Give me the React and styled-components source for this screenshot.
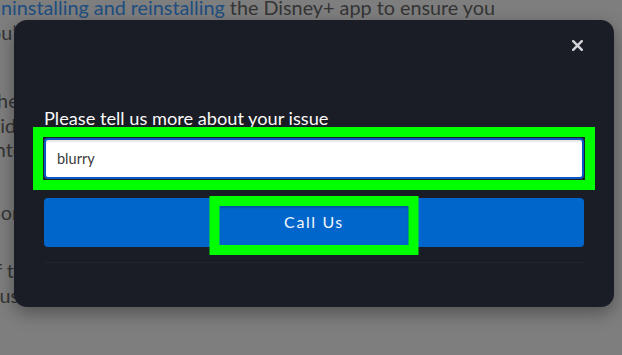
import React from "react";
import styled, { createGlobalStyle } from "styled-components";

const Global = createGlobalStyle`
  html, body { margin: 0; padding: 0; }
  body {
    width: 622px;
    height: 355px;
    overflow: hidden;
    background: #ffffff;
    font-family: Lato, "Noto Sans", sans-serif;
  }
`;

const Page = styled.div`
  position: relative;
  width: 622px;
  height: 355px;
  overflow: hidden;
  background: #fdfdfd;
`;

const Article = styled.div`
  margin-left: -10px;
  margin-top: -5px;
  width: 560px;
  color: #6a6a6a;
  font-size: 19.8px;
  line-height: 24.5px;
  white-space: nowrap;
`;

const Para = styled.p`
  margin: 0 0 ${(p) => p.$gap || 0}px 0;
  text-indent: ${(p) => p.$indent || 0}px;
`;

const Link = styled.span`
  color: #3e9cff;
`;

const Overlay = styled.div`
  position: absolute;
  inset: 0;
  background: rgba(0, 0, 0, 0.5);
  display: flex;
  align-items: flex-start;
  justify-content: flex-start;
  padding: 20px 0 0 14px;
`;

const Modal = styled.div`
  width: 600px;
  height: 287px;
  box-sizing: border-box;
  background: #1b1d26;
  border-radius: 13px;
  padding: 19px 30px 0 30px;
  display: flex;
  flex-direction: column;
  box-shadow: 0 6px 18px rgba(0, 0, 0, 0.35);
`;

const Header = styled.div`
  display: flex;
  justify-content: flex-end;
  padding-right: 1px;
  height: 12px;
`;

const CloseButton = styled.button`
  width: 12px;
  height: 12px;
  padding: 0;
  border: 0;
  background: transparent;
  display: flex;
  align-items: center;
  justify-content: center;
  cursor: pointer;
`;

const Label = styled.label`
  margin-top: 56px;
  color: #f9f9f9;
  font-size: 18.2px;
  line-height: 22px;
  height: 22px;
`;

const InputFrame = styled.div`
  margin: -2px -11px 0 -11px;
  border: 10px solid #00ff00;
  padding: 1px;
  background: #1f2128;
`;

const Input = styled.input`
  display: block;
  width: 100%;
  height: 41px;
  box-sizing: border-box;
  border: 2px solid #0a56c2;
  border-radius: 4px;
  background: #ffffff;
  box-shadow: inset 0 2px 2px rgba(0, 0, 0, 0.1);
  padding: 0 11px;
  font-family: Lato, "Noto Sans", sans-serif;
  font-size: 14.5px;
  color: #3b3b3b;
  outline: none;
`;

const ActionButton = styled.button`
  position: relative;
  margin-top: 8px;
  width: 100%;
  height: 49px;
  border: 0;
  border-radius: 4px;
  background: #0066cc;
  color: #f4f7fb;
  font-family: Lato, "Noto Sans", sans-serif;
  font-size: 16px;
  letter-spacing: 1.6px;
  cursor: pointer;
  display: flex;
  align-items: center;
  justify-content: center;
  padding: 0 0 2px 0;
`;

const Highlight = styled.span`
  position: absolute;
  left: 50%;
  top: -2px;
  transform: translateX(-50%);
  width: 209px;
  height: 59px;
  box-sizing: border-box;
  border: 10px solid #00ff00;
  box-shadow: inset 0 2px 2px rgba(0, 0, 0, 0.18);
  pointer-events: none;
`;

const Separator = styled.div`
  margin-top: 15px;
  height: 1px;
  background: rgba(255, 255, 255, 0.03);
`;

export default function App() {
  return (
    <>
      <Global />
      <Page>
        <Article>
          <Para $gap={0}>
            <Link>uninstalling and reinstalling</Link> the Disney+ app to ensure you
          </Para>
          <Para $gap={44} $indent={-10}>
            you’ve got the latest version of Disney+ and its features.
          </Para>
          <Para $gap={0}>
            the app is still unwatchable, restart your device and check
          </Para>
          <Para $gap={0}>
            video settings. Streaming at a lower resolution might help
          </Para>
          <Para $gap={38}>
            internet connection speeds and enhance playback quality.
          </Para>
          <Para $gap={34}>
            Some problems can be fixed by clearing the app's cache.
          </Para>
          <Para $gap={0}>
            If these steps don't fix the issue, please contact Disney+
          </Para>
          <Para $gap={0}>
            customer service for further help with your account.
          </Para>
        </Article>
        <Overlay>
          <Modal role="dialog">
            <Header>
              <CloseButton aria-label="Close">
                <svg width="11" height="11" viewBox="0 0 11 11">
                  <path
                    d="M1.2 1.2 L9.8 9.8 M9.8 1.2 L1.2 9.8"
                    stroke="#d4d5d8"
                    strokeWidth="2.4"
                    strokeLinecap="round"
                  />
                </svg>
              </CloseButton>
            </Header>
            <Label htmlFor="issue">Please tell us more about your issue</Label>
            <InputFrame>
              <Input id="issue" defaultValue="blurry" />
            </InputFrame>
            <ActionButton>
              Call Us
              <Highlight />
            </ActionButton>
            <Separator />
          </Modal>
        </Overlay>
      </Page>
    </>
  );
}
